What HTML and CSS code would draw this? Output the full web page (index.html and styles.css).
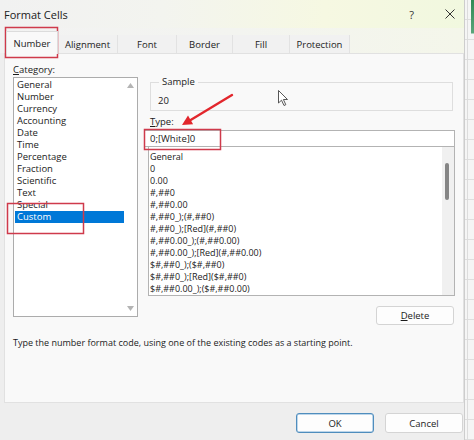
FILE: index.html
```html
<!DOCTYPE html>
<html>
<head>
<meta charset="utf-8">
<title>Format Cells</title>
<link rel="stylesheet" href="styles.css">
</head>
<body>
<div class="dialog">
  <div class="titlebar">
    <span class="title">Format Cells</span>
    <span class="help">?</span>
    <svg class="close" width="10" height="10" viewBox="0 0 10 10"><path d="M0.5 0.5 L9.5 9.5 M9.5 0.5 L0.5 9.5" stroke="#333" stroke-width="1" fill="none"/></svg>
  </div>
  <div class="tabbar">
    <div class="tab active">Number</div>
    <div class="tab t-align">Alignment</div>
    <div class="tab t-font">Font</div>
    <div class="tab t-border">Border</div>
    <div class="tab t-fill">Fill</div>
    <div class="tab t-prot">Protection</div>
  </div>
  <div class="panel">
    <div class="cols">
      <div class="left">
        <div class="label"><u>C</u>ategory:</div>
        <div class="catbox">
          <ul class="catlist">
            <li>General</li>
            <li>Number</li>
            <li>Currency</li>
            <li>Accounting</li>
            <li>Date</li>
            <li>Time</li>
            <li>Percentage</li>
            <li>Fraction</li>
            <li>Scientific</li>
            <li>Text</li>
            <li>Special</li>
            <li class="sel">Custom</li>
          </ul>
          <div class="vscroll">
            <svg width="7" height="5" viewBox="0 0 7 5"><path d="M0 5 L3.5 0 L7 5 Z" fill="#b4b4b4"/></svg>
            <svg width="7" height="5" viewBox="0 0 7 5"><path d="M0 0 L7 0 L3.5 5 Z" fill="#b4b4b4"/></svg>
          </div>
        </div>
      </div>
      <div class="right">
        <fieldset class="sample">
          <legend>Sample</legend>
          <div class="sample-val">20</div>
        </fieldset>
        <div class="label type-label"><u>T</u>ype:</div>
        <div class="type-input">0;[White]0</div>
        <div class="fmtbox">
          <ul class="fmtlist">
            <li>General</li>
            <li>0</li>
            <li>0.00</li>
            <li>#,##0</li>
            <li>#,##0.00</li>
            <li>#,##0_);(#,##0)</li>
            <li>#,##0_);[Red](#,##0)</li>
            <li>#,##0.00_);(#,##0.00)</li>
            <li>#,##0.00_);[Red](#,##0.00)</li>
            <li>$#,##0_);($#,##0)</li>
            <li>$#,##0_);[Red]($#,##0)</li>
            <li>$#,##0.00_);($#,##0.00)</li>
          </ul>
          <div class="track"><div class="thumb"></div></div>
        </div>
        <div class="btnrow"><button class="btn"><u>D</u>elete</button></div>
      </div>
    </div>
    <p class="desc">Type the number format code, using one of the existing codes as a starting point.</p>
  </div>
  <div class="footer">
    <button class="btn ok">OK</button>
    <button class="btn">Cancel</button>
  </div>
</div>
<div class="grid"></div>
<svg class="overlay" width="474" height="440" viewBox="0 0 474 440">
  <rect x="5.5" y="27.5" width="52" height="30" fill="none" stroke="#cf3a4b" stroke-width="1.5"/>
  <rect x="7.5" y="203.5" width="76" height="30" fill="none" stroke="#cf3a4b" stroke-width="1.5"/>
  <rect x="144.5" y="129.5" width="76" height="20" fill="none" stroke="#cf3a4b" stroke-width="1.5"/>
  <line x1="232" y1="95" x2="189" y2="121" stroke="#e2262c" stroke-width="2.4" stroke-linecap="round"/>
  <polygon points="182,125 193.1,124.2 188,115.6" fill="#e2262c"/>
  <path d="M278.5 90.5 L278.5 103 L281.5 100.2 L284 105.5 L285.8 104.7 L283.4 99.5 L287.5 99.5 Z" fill="#fff" stroke="#444" stroke-width="0.9" stroke-linejoin="round"/>
</svg>
</body>
</html>
```

FILE: styles.css
```css
* { box-sizing: border-box; }

body {
  margin: 0;
  width: 474px;
  height: 440px;
  overflow: hidden;
  display: flex;
  position: relative;
  font-family: "Open Sans", "Noto Sans", sans-serif;
  font-size: 9px;
  color: #1b1b1b;
  background: #f4f4f4;
}

.dialog {
  width: 465px;
  height: 440px;
  flex: none;
  display: flex;
  flex-direction: column;
  background: #eeeeee;
  border-right: 1px solid #cdcdcd;
}

.titlebar {
  height: 28px;
  flex: none;
  display: flex;
  align-items: center;
  padding-left: 4px;
  background: linear-gradient(90deg, #f1f1f1 0%, #f3f4ef 35%, #f6f8e2 70%, #f1f8df 100%);
}

.title {
  flex: 1;
  font-size: 11px;
  color: #202020;
}

.help {
  font-size: 11px;
  color: #333;
  margin-right: 31px;
}

.close {
  margin-right: 9px;
}

.tabbar {
  height: 25px;
  flex: none;
  display: flex;
  align-items: flex-end;
  padding-left: 6px;
  background: linear-gradient(90deg, #f2f2f2 0%, #f3f4f0 50%, #f4f6ea 100%);
}

.tab {
  height: 18px;
  display: flex;
  align-items: center;
  justify-content: center;
  font-size: 9.5px;
  color: #222;
  background: #f1f1f1;
  border-right: 1px solid #e2e2e2;
}

.tab.active {
  width: 52px;
  height: 23px;
  background: #f9f9f9;
  border: 1px solid #dcdcdc;
  border-bottom: none;
  margin-bottom: -1px;
  position: relative;
  z-index: 1;
}

.t-align { width: 60px; }
.t-font { width: 59px; }
.t-border { width: 56px; }
.t-fill { width: 57px; }
.t-prot { width: 60px; }

.panel {
  height: 350px;
  flex: none;
  margin-left: 4px;
  background: #f9f9f9;
  border: 1px solid #e1e1e1;
  padding: 8px 8px 0 8px;
}

.cols {
  display: flex;
  gap: 6px;
}

.left {
  width: 125px;
  flex: none;
}

.label {
  line-height: 15px;
  height: 15px;
  font-size: 9.5px;
}

.catbox {
  height: 240px;
  border: 1px solid #acacac;
  background: #fff;
  display: flex;
}

.catlist {
  flex: 1;
  margin: 0;
  padding: 1px 0 0 1px;
  list-style: none;
}

.catlist li {
  line-height: 12px;
  height: 12px;
  padding-left: 2px;
  font-size: 9.5px;
}

.catlist li.sel {
  background: #0078d7;
  color: #fff;
}

.vscroll {
  width: 13px;
  flex: none;
  display: flex;
  flex-direction: column;
  justify-content: space-between;
  align-items: center;
  padding: 5px 0 5px 0;
}

.right {
  width: 311px;
  flex: none;
}

.sample {
  margin: 14px 2px 0 6px;
  padding: 0 0 3px 7px;
  border: 1px solid #dedede;
  min-width: 0;
}

.sample legend {
  padding: 0 3px;
  margin-left: 1px;
  font-size: 9.5px;
  line-height: 12px;
}

.sample-val {
  margin-top: 7px;
  line-height: 12px;
  font-size: 9.5px;
}

.type-label {
  margin-top: 5px;
  line-height: 12px;
  height: 12px;
  padding-left: 6px;
}

.type-input {
  margin-top: 2px;
  height: 17px;
  border: 1px solid #b3b3b3;
  background: #fff;
  padding-left: 5px;
  line-height: 15px;
  font-size: 9.5px;
}

.fmtbox {
  height: 149px;
  margin-left: 4px;
  border: 1px solid #b3b3b3;
  border-top: none;
  background: #fff;
  display: flex;
}

.fmtlist {
  flex: 1;
  margin: 0;
  padding: 4px 0 0 1px;
  list-style: none;
}

.fmtlist li {
  line-height: 12px;
  height: 12px;
  font-size: 9px;
  white-space: nowrap;
}

.track {
  width: 12px;
  flex: none;
  background: #f0f0f0;
  padding: 16px 0 0 3px;
}

.thumb {
  width: 4px;
  height: 37px;
  border-radius: 2px;
  background: #858585;
}

.btnrow {
  display: flex;
  justify-content: flex-end;
  margin-top: 10px;
  padding-right: 1px;
}

.btn {
  width: 78px;
  height: 19px;
  padding: 0;
  background: #fdfdfd;
  border: 1px solid #d4d4d4;
  border-radius: 3px;
  font-family: "Open Sans", "Noto Sans", sans-serif;
  font-size: 9.5px;
  color: #1b1b1b;
}

.desc {
  margin: 12px 0 0 0;
  line-height: 12px;
  font-size: 9px;
}

.footer {
  flex: 1;
  display: flex;
  justify-content: flex-end;
  align-items: flex-start;
  gap: 11px;
  padding: 10px 1px 0 0;
}

.footer .btn {
  height: 20px;
}

.footer .btn.ok {
  border: 1px solid #4f8dbd;
  box-shadow: inset 0 0 0 0.5px #7fb0d8;
}

.grid {
  flex: 1;
  background:
    linear-gradient(180deg, #2f8a55 0, #5aa57a 33px, transparent 34px) right top / 3px 100% no-repeat,
    linear-gradient(90deg, transparent 2px, #dcdcdc 2px, #dcdcdc 3px, transparent 3px),
    repeating-linear-gradient(180deg, #f5f5f5 0, #f5f5f5 19px, #dedede 19px, #dedede 20px);
}

.overlay {
  position: absolute;
  left: 0;
  top: 0;
  pointer-events: none;
}
```
